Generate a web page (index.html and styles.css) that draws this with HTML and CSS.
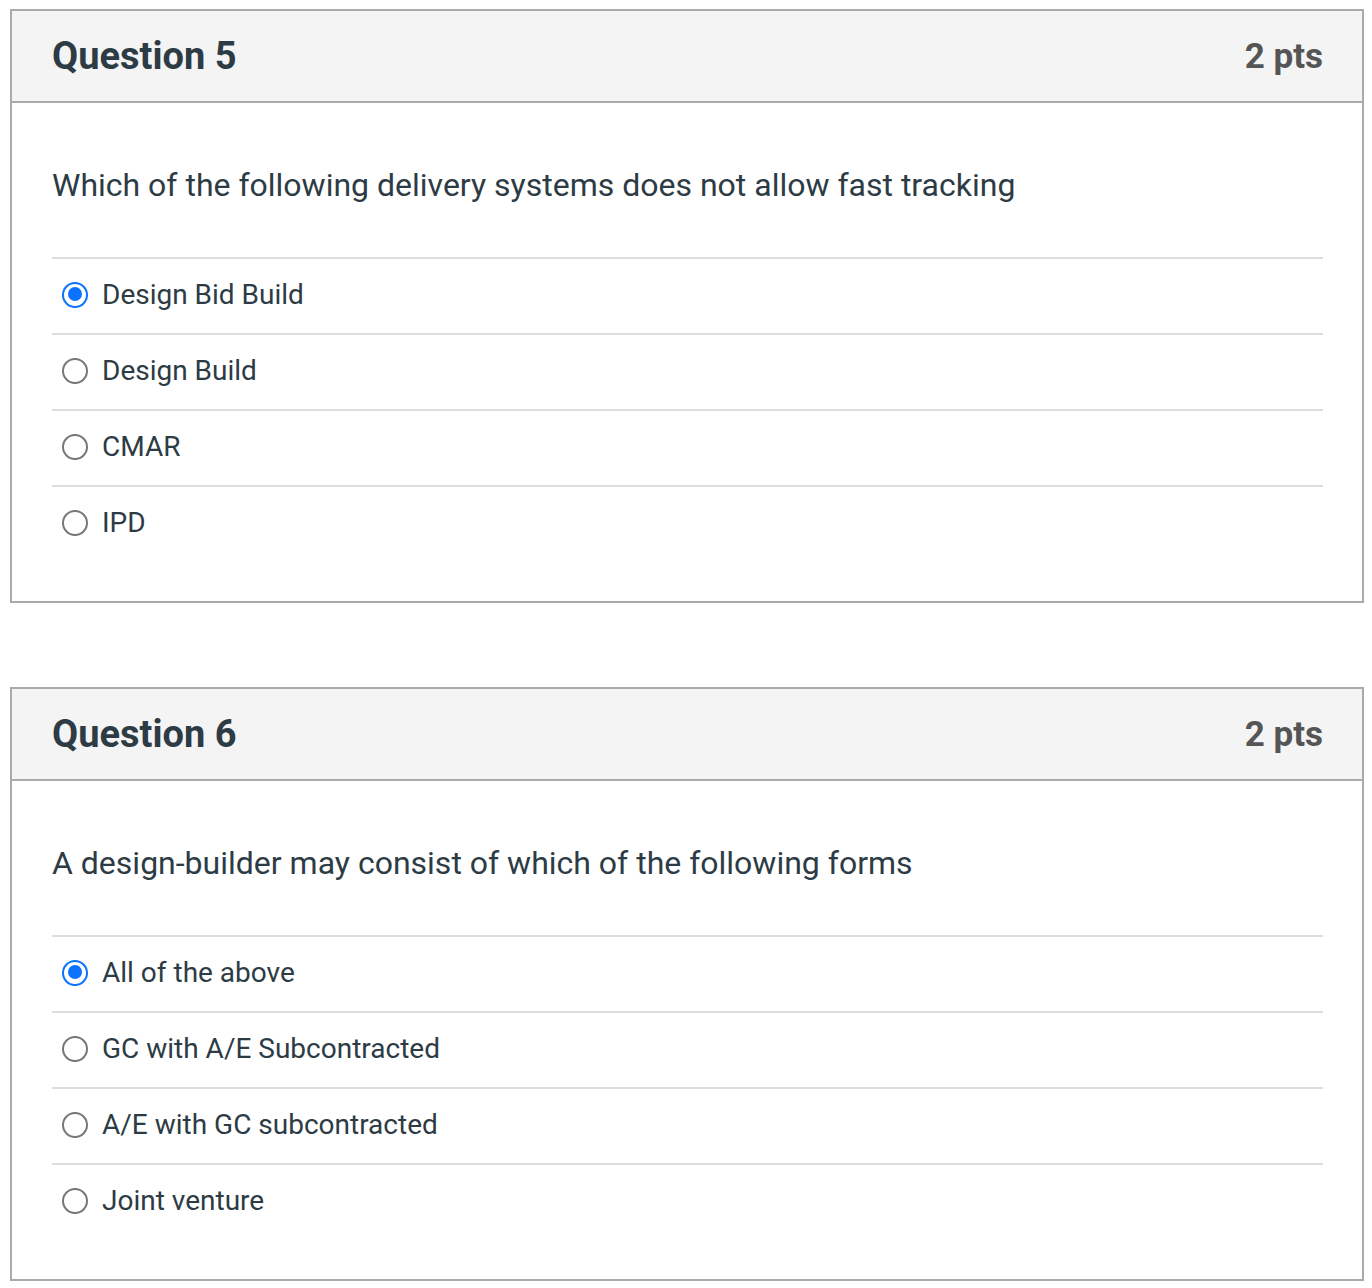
FILE: index.html
```html
<!DOCTYPE html>
<html>
<head>
<meta charset="utf-8">
<link rel="stylesheet" href="styles.css">
</head>
<body>
<div class="page">
  <div class="card">
    <div class="card-header">
      <div class="q-title">Question 5</div>
      <div class="q-pts">2 pts</div>
    </div>
    <div class="card-body">
      <div class="q-text">Which of the following delivery systems does not allow fast tracking</div>
      <div class="answers">
        <div class="answer"><span class="radio checked"></span><span class="a-label">Design Bid Build</span></div>
        <div class="answer"><span class="radio"></span><span class="a-label">Design Build</span></div>
        <div class="answer"><span class="radio"></span><span class="a-label">CMAR</span></div>
        <div class="answer"><span class="radio"></span><span class="a-label">IPD</span></div>
      </div>
    </div>
  </div>
  <div class="card">
    <div class="card-header">
      <div class="q-title">Question 6</div>
      <div class="q-pts">2 pts</div>
    </div>
    <div class="card-body">
      <div class="q-text">A design-builder may consist of which of the following forms</div>
      <div class="answers">
        <div class="answer"><span class="radio checked"></span><span class="a-label">All of the above</span></div>
        <div class="answer"><span class="radio"></span><span class="a-label">GC with A/E Subcontracted</span></div>
        <div class="answer"><span class="radio"></span><span class="a-label">A/E with GC subcontracted</span></div>
        <div class="answer"><span class="radio"></span><span class="a-label">Joint venture</span></div>
      </div>
    </div>
  </div>
</div>
</body>
</html>
```

FILE: styles.css
```css
html, body {
  margin: 0;
  padding: 0;
  background: #ffffff;
}
body {
  font-family: Roboto, "Liberation Sans", Arial, sans-serif;
  color: #2d3b45;
}
.page {
  padding: 9px 9px 0 10px;
  display: flex;
  flex-direction: column;
  gap: 84px;
}
.card {
  width: 1354px;
  box-sizing: border-box;
  border: 2px solid #aaaaaa;
  background: #ffffff;
}
.card-header {
  height: 92px;
  box-sizing: border-box;
  background: #f4f4f4;
  border-bottom: 2px solid #aaaaaa;
  display: flex;
  align-items: center;
  justify-content: space-between;
  padding: 0 39px 0 40px;
}
.q-title {
  font-weight: 700;
  font-size: 38px;
  color: #2d3b45;
}
.q-pts {
  font-weight: 700;
  font-size: 35px;
  color: #555555;
}
.card-body {
  padding: 60px 39px 40px 40px;
}
.q-text {
  font-size: 32px;
  line-height: 45px;
  margin-bottom: 49px;
}
.answers {
  display: flex;
  flex-direction: column;
}
.answer {
  height: 76px;
  box-sizing: border-box;
  border-top: 2px solid #dddddd;
  display: flex;
  align-items: center;
  padding-left: 10px;
  padding-bottom: 3px;
}
.radio {
  width: 26px;
  height: 26px;
  box-sizing: border-box;
  border-radius: 50%;
  border: 2px solid #777777;
  flex: none;
  margin-right: 14px;
  position: relative;
}
.radio.checked {
  border: 2.5px solid #0a72ff;
}
.radio.checked::after {
  content: "";
  position: absolute;
  left: 3.5px;
  top: 3.5px;
  width: 14px;
  height: 14px;
  border-radius: 50%;
  background: #0a72ff;
}
.a-label {
  font-size: 28px;
}
```
